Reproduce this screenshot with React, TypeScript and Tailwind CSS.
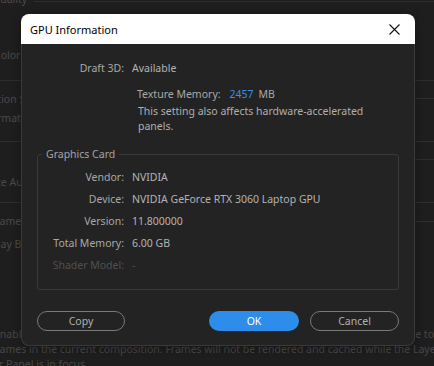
import React from "react";

function BgLine({ className = "" }: { className?: string }) {
  return <div className={"h-px bg-[#2e2e2e] " + className} />;
}

export default function App() {
  return (
    <div className="relative w-[434px] h-[366px] overflow-hidden bg-[#1e1e1e] text-[10.5px] text-[#4a4a4a] font-['Noto_Sans',sans-serif]">
      {/* dimmed preferences background */}
      <div className="flex flex-col">
        <div className="flex items-start h-[9px]">
          <span className="-mt-[9px] -ml-[8px] leading-[16px] whitespace-nowrap">Quality</span>
          <div className="flex-1 h-px bg-[#2e2e2e] mt-[1px] ml-[7px]" />
        </div>
        <div className="mt-[38px] h-[16px] leading-[16px] -ml-[6px] whitespace-nowrap">Color Management Quality</div>
        <BgLine className="mt-[17px]" />
        <div className="mt-[10px] h-[16px] flex items-start">
          <span className="leading-[16px] -ml-[46px] whitespace-nowrap">Composition Settings</span>
          <div className="flex-1" />
          <div className="w-[200px] h-px bg-[#2e2e2e] mt-[7px]" />
        </div>
        <div className="mt-[3px] h-[16px] leading-[16px] -ml-[23px] whitespace-nowrap">Information</div>
        <BgLine className="mt-[15px]" />
        <div className="mt-[17px] h-px flex">
          <div className="flex-1" />
          <div className="w-[200px] h-px bg-[#2e2e2e]" />
        </div>
        <div className="mt-[14px] h-[16px] leading-[16px] -ml-[19px] whitespace-nowrap">Mute Audio When Preview</div>
        <BgLine className="mt-[12px]" />
        <div className="mt-[10px] h-[16px] flex items-start">
          <span className="leading-[16px] -ml-[10px] whitespace-nowrap">Frames</span>
          <div className="flex-1" />
          <div className="w-[200px] h-px bg-[#2e2e2e] mt-[8px]" />
        </div>
        <div className="mt-[7px] h-[16px] leading-[16px] -ml-[24px] whitespace-nowrap">Display Buffer</div>
        <div className="mt-[75px] leading-[15px] whitespace-nowrap text-[#474747]">
          <div className="flex">
            <span className="-ml-[6px]">Enable</span>
            <div className="flex-1" />
            <span>continue to</span>
          </div>
          <div className="-ml-[10px]">
            Frames in the current composition. Frames will not be rendered and cached while the Layer
          </div>
          <div className="-ml-[1px]">r Panel is in focus.</div>
        </div>
      </div>

      {/* dialog */}
      <div className="absolute left-[21px] top-[14px] w-[394px] rounded-[8px] shadow-[0_2px_10px_rgba(0,0,0,0.35)]">
        <div className="h-[30px] bg-white rounded-t-[8px] flex items-center pl-[9px] pr-[15px]">
          <span className="text-[11px] text-black leading-none">GPU Information</span>
          <div className="flex-1" />
          <svg width="11" height="11" viewBox="0 0 11 11">
            <path d="M0.5 0.5 L10.5 10.5 M10.5 0.5 L0.5 10.5" stroke="#111" strokeWidth="1.1" />
          </svg>
        </div>
        <div className="bg-[#232323] border-x border-b border-[#3a3a3a] rounded-b-[8px] px-[15px] pt-[14px] pb-[14px] text-[#a9a9a9]">
          <div className="grid grid-cols-[87px_1fr] gap-x-[8px] h-[22px] items-center">
            <span className="text-right">Draft 3D:</span>
            <span className="text-[#b3b3b3]">Available</span>
          </div>
          <div className="mt-[6px] ml-[100px] h-[16px] leading-[16px] flex">
            <span>Texture Memory:</span>
            <span className="ml-[9px] text-[#3b8fe8]">2457</span>
            <span className="ml-[5px]">MB</span>
          </div>
          <div className="mt-[2px] ml-[101px] leading-[15px] text-[#b0b0b0]">
            This setting also affects hardware-accelerated
            <br />
            panels.
          </div>
          <fieldset className="mt-[12px] border border-[#3a3a3a] rounded-[3px] pt-[5px] pb-[12px]">
            <legend className="ml-[4px] px-[4px] leading-[16px] text-[#a3a3a3]">Graphics Card</legend>
            <div className="grid grid-cols-[86px_1fr] gap-x-[8px] auto-rows-[22px] items-center">
              <span className="text-right">Vendor:</span>
              <span className="text-[#b3b3b3]">NVIDIA</span>
              <span className="text-right">Device:</span>
              <span className="text-[#b3b3b3]">NVIDIA GeForce RTX 3060 Laptop GPU</span>
              <span className="text-right">Version:</span>
              <span className="text-[#b3b3b3]">11.800000</span>
              <span className="text-right">Total Memory:</span>
              <span className="text-[#b3b3b3]">6.00 GB</span>
              <span className="text-right text-[#505050]">Shader Model:</span>
              <span className="text-[#505050]">-</span>
            </div>
          </fieldset>
          <div className="mt-[21px] flex items-center">
            <button className="w-[88px] h-[20px] rounded-full border-[1.5px] border-[#7a7a7a] text-[#b0b0b0] leading-none">
              Copy
            </button>
            <div className="flex-1" />
            <button className="w-[90px] h-[20px] rounded-full bg-[#2d8dea] text-white leading-none">
              OK
            </button>
            <button className="ml-[11px] w-[89px] h-[20px] rounded-full border-[1.5px] border-[#7a7a7a] text-[#b0b0b0] leading-none">
              Cancel
            </button>
          </div>
        </div>
      </div>
    </div>
  );
}
